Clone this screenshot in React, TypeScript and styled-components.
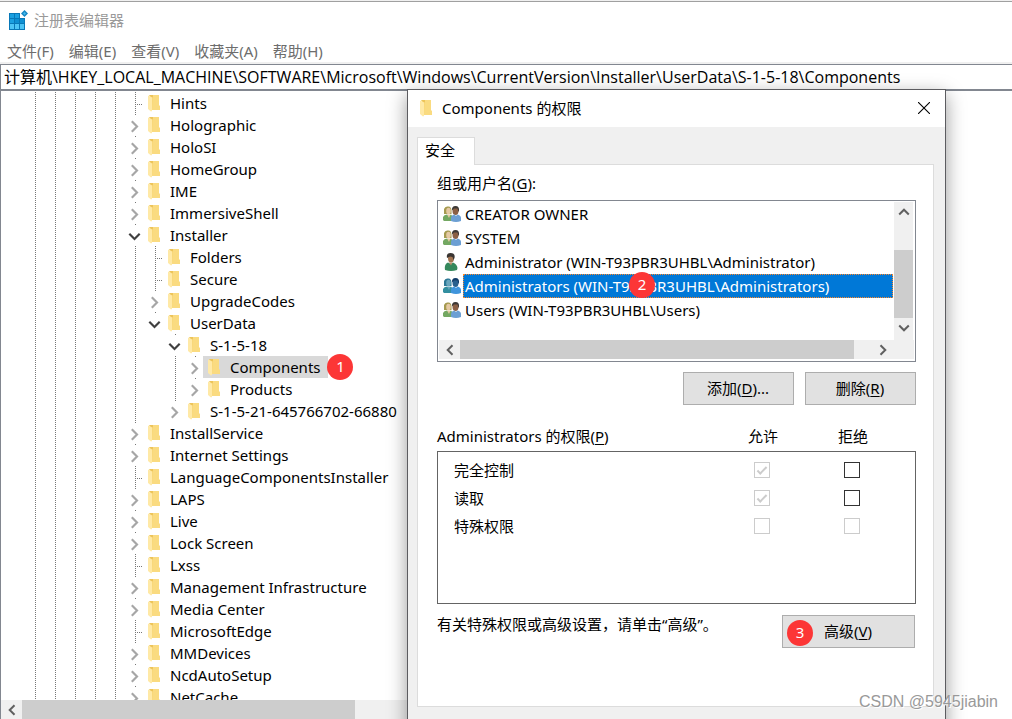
import React from "react";
import styled, { createGlobalStyle, css } from "styled-components";

const GlobalStyle = createGlobalStyle`
  *, *::before, *::after { box-sizing: border-box; }
  body {
    margin: 0;
    background: #fff;
    color: #000;
    font: 15px/20px "Noto Sans", "Noto Sans CJK SC", sans-serif;
  }
  button, input { font: inherit; color: inherit; }
  u { text-underline-offset: 2px; }
`;

const Window = styled.div`
  position: relative;
  display: flex;
  flex-direction: column;
  height: 100vh;
  overflow: hidden;
  border-top: 1px solid #f0f0f0;
`;

const TitleBar = styled.header`
  display: flex;
  align-items: center;
  gap: 6px;
  height: 38px;
  padding: 0 0 2px 8px;
  border-top: 1px solid #a0a0a0;
  color: #999;
`;

const WindowTitle = styled.h1`
  margin: 0;
  font-size: 15px;
  font-weight: 400;
`;

const MenuBar = styled.nav`
  display: flex;
  align-items: center;
  gap: 15px;
  height: 25px;
  padding-left: 7px;
  border-bottom: 2px solid #f0f0f0;
`;

const MenuButton = styled.button`
  padding: 0;
  border: 0;
  background: none;
  color: #6d6d6d;
`;

const AddressInput = styled.input`
  width: 100%;
  height: 26px;
  padding: 0 3px 2px;
  border: 1px solid #828790;
  border-right: 0;
  background: #fff;
  outline: 0;
  font-family: "Open Sans", "Noto Sans CJK SC", sans-serif;
  font-size: 16px;
`;

const Panes = styled.main`
  display: flex;
  flex: 1;
  min-height: 0;
  border-top: 1px solid #828790;
`;

const TreePane = styled.section`
  display: flex;
  flex-direction: column;
  width: 44%;
  border-left: 1px solid #828790;
`;

const TreeList = styled.ul`
  flex: 1;
  min-height: 0;
  margin: 0;
  padding: 1px 0 0 24px;
  overflow: hidden;
  list-style: none;
`;

const TreeRow = styled.li`
  display: flex;
  height: 22px;
  white-space: nowrap;
`;

const dots = "#777 0 1px, transparent 1px 2px";

const Guide = styled.span<{ $line: boolean; $branch?: boolean }>`
  display: flex;
  flex: none;
  width: 20px;
  height: 22px;
  background-repeat: no-repeat;
  ${(p) =>
    p.$line &&
    css`
      background-image: repeating-linear-gradient(to bottom, ${dots})${p.$branch ? `, repeating-linear-gradient(to right, ${dots})` : ""};
      background-size: 1px 22px, 8px 1px;
      background-position: 10px 0, 10px 12px;
    `}
`;

const Expander = styled.button`
  display: grid;
  place-items: center;
  width: 19px;
  height: 20px;
  margin-top: 2px;
  padding: 0;
  border: 0;
  background: #fff;
`;

const NodeLabel = styled.span<{ $selected?: boolean }>`
  position: relative;
  display: flex;
  align-items: center;
  gap: 10px;
  margin-left: -2px;
  padding: 0 8px 0 5px;
  background: ${(p) => (p.$selected ? "#d9d9d9" : "none")};
`;

const Badge = styled.span<{ $left: string; $top: number }>`
  position: absolute;
  z-index: 1;
  left: ${(p) => p.$left};
  top: ${(p) => p.$top}px;
  width: 26px;
  height: 26px;
  border-radius: 50%;
  background: #fc3636;
  color: #fff;
  line-height: 24px;
  text-align: center;
`;

const ScrollTrack = styled.div<{ $vertical?: boolean }>`
  display: flex;
  flex: none;
  flex-direction: ${(p) => (p.$vertical ? "column" : "row")};
  ${(p) => (p.$vertical ? "width: 19px; padding-bottom: 2px;" : "height: 19px;")}
  background: #f0f0f0;
`;

const ScrollButton = styled.button<{ $vertical?: boolean }>`
  display: grid;
  flex: none;
  place-items: center;
  ${(p) => (p.$vertical ? "height: 20px;" : "width: 21px;")}
  padding: 0;
  border: 0;
  background: none;
`;

const ScrollThumb = styled.div<{ $size: number }>`
  flex: ${(p) => p.$size} 0 0;
  background: #cdcdcd;
`;

const ScrollGap = styled.div<{ $size: number }>`
  flex: ${(p) => p.$size} 0 0;
`;

const Dialog = styled.section`
  position: absolute;
  top: 88px;
  left: 407px;
  width: 539px;
  border: 1px solid #5c5c60;
  background: #f0f0f0;
  box-shadow: 0 6px 18px rgba(0, 0, 0, 0.4);
`;

const DialogHeader = styled.header`
  display: flex;
  align-items: center;
  gap: 10px;
  height: 37px;
  padding: 0 9px 2px 12px;
  background: #fff;
`;

const DialogTitle = styled.h2`
  flex: 1;
  margin: 0;
  font-size: 15px;
  font-weight: 400;
`;

const CloseButton = styled.button`
  display: grid;
  place-items: center;
  width: 24px;
  height: 24px;
  padding: 0;
  border: 0;
  background: none;
`;

const DialogBody = styled.div`
  padding: 10px 11px 48px 9px;
`;

const Tab = styled.button`
  position: relative;
  display: block;
  width: 58px;
  height: 28px;
  margin-bottom: -1px;
  padding: 0 7px 3px;
  border: 1px solid #dcdcdc;
  border-bottom: 0;
  background: #fff;
  text-align: left;
`;

const TabPanel = styled.div`
  padding: 8px 17px 58px 19px;
  border: 1px solid #dcdcdc;
  background: #fff;
`;

const FieldLabel = styled.div`
  height: 27px;
`;

const ListFrame = styled.div`
  height: 162px;
  display: flex;
  flex-direction: column;
  padding: 1px 1px 2px;
  border: 1px solid #828790;
`;

const ListArea = styled.div`
  display: flex;
  flex: 1;
  padding-right: 1px;
`;

const Principals = styled.ul`
  flex: 1;
  margin: 0;
  padding: 0 1px 0 4px;
  list-style: none;
`;

const Principal = styled.li`
  display: flex;
  align-items: center;
  gap: 2px;
  height: 24px;
`;

const PrincipalName = styled.span<{ $selected?: boolean }>`
  position: relative;
  flex: 1;
  height: 24px;
  padding: 0 1px;
  border: 1px dotted transparent;
  line-height: 22px;
  white-space: nowrap;
  ${(p) => p.$selected && "background: #0078d7; border-color: #ff8728; color: #fff;"}
`;

const HorizontalScroll = styled.div`
  display: flex;
  background: #f0f0f0;
  padding-right: 21px;
  & > * { flex: 1; }
`;

const ButtonRow = styled.div`
  display: flex;
  justify-content: flex-end;
  gap: 11px;
  margin: 10px 0 21px;
`;

const PushButton = styled.button<{ $width: number }>`
  position: relative;
  width: ${(p) => p.$width}px;
  height: 33px;
  padding: 0 1px 2px 0;
  border: 1px solid #adadad;
  background: #e1e1e1;
`;

const Permissions = styled.table`
  display: block;
`;

const PermissionHead = styled.thead`
  display: block;
  height: 25px;
  padding-right: 18px;
`;

const PermissionBody = styled.tbody`
  display: block;
  height: 153px;
  padding: 4px 18px 0 16px;
  border: 1px solid #646464;
`;

const PermissionRow = styled.tr`
  display: grid;
  grid-template-columns: 1fr 90px 90px;
  align-items: center;
`;

const HeadCell = styled.th<{ $first?: boolean }>`
  padding: 0;
  font-weight: 400;
  text-align: ${(p) => (p.$first ? "left" : "center")};
`;

const NameCell = styled.th`
  padding: 0;
  font-weight: 400;
  line-height: 28px;
  text-align: left;
`;

const CheckCell = styled.td`
  display: grid;
  place-items: center;
  height: 28px;
  padding: 0;
`;

const CheckBox = styled.input`
  display: grid;
  place-items: center;
  width: 16px;
  height: 16px;
  margin: 0;
  appearance: none;
  border: 1px solid #333;
  background: #fff;
  &:disabled { border-color: #ccc; }
  &:checked::after {
    content: "";
    width: 10px;
    height: 5px;
    margin-top: -2px;
    border: solid #ccc;
    border-width: 0 0 2px 2px;
    transform: rotate(-45deg);
  }
`;

const Advanced = styled.div`
  display: flex;
  justify-content: space-between;
  margin-top: 11px;
  padding-right: 1px;
  line-height: 18px;
`;

const Watermark = styled.div`
  position: absolute;
  right: 14px;
  bottom: 7px;
  color: #999;
  font: 16px/20px "Liberation Sans", sans-serif;
  text-shadow: 1px 1px 0 #fff;
`;

type Direction = "left" | "right" | "up" | "down";
const turn: Record<Direction, number> = { right: 0, down: 90, left: 180, up: 270 };

function Chevron({ to, color = "#606060", size = 12 }: { to: Direction; color?: string; size?: number }) {
  return (
    <svg width={size} height={size} viewBox="0 0 12 12" fill="none" stroke={color} strokeWidth="2" aria-hidden="true">
      <path d="M3.5 1.2 8.3 6 3.5 10.8" transform={`rotate(${turn[to]} 6 6)`} />
    </svg>
  );
}

function FolderIcon() {
  return (
    <svg width="12" height="18" viewBox="0 0 12 18" aria-hidden="true">
      <path d="M1.5 1H11V11.5L12 12V16H3Z" fill="#f7d677" />
      <path d="M5 1H11V11.5L12 12V16H4Z" fill="#fadb80" />
      <path d="M1 1H5V3L4 3.5 2 2Z" fill="#edc45a" />
      <path d="M0 1.5 4 3.5V17L3 17.5 0 15Z" fill="#ffe9a6" />
    </svg>
  );
}

function RegistryIcon() {
  return (
    <svg width="20" height="20" viewBox="0 0 20 20" aria-hidden="true">
      <path d="M1 3H12V8H17V20H1Z" fill="#0878b8" />
      <path d="M2 4H6V8H2ZM7 4H11V8H7ZM2 9H6V13H2Z" fill="#1a9fe0" />
      <path d="M7 9H11V13H7ZM12 9H16V13H12Z" fill="#0e8fd2" />
      <path d="M2 14H6V19H2ZM7 14H11V19H7ZM12 14H16V19H12Z" fill="#4cc4f5" />
      <path d="M16.5 0 20 3.5 16.5 7 13 3.5Z" fill="#1587c4" />
      <path d="M16.5 2 18 3.5 16.5 5 15 3.5Z" fill="#43b9ee" />
    </svg>
  );
}

function GroupIcon({ selected }: { selected?: boolean }) {
  const c = selected
    ? { hair: "#2d7896", face: "#6aa6bd", body: "#338fa0", hair2: "#123c68", face2: "#285f8d", body2: "#4095dc" }
    : { hair: "#a59a50", face: "#e5c9a4", body: "#74a862", hair2: "#3c3835", face2: "#8b6045", body2: "#6c9fd3" };
  return (
    <svg width="18" height="18" viewBox="0 -1 18 18" aria-hidden="true">
      <path d="M1 8V3Q2 0 5 .5 8 0 8.5 4V8Z" fill={c.hair} />
      <ellipse cx="5.5" cy="5" rx="2.3" ry="3.3" fill={c.face} />
      <path d="M0 14V11Q1 8.500 4 8.500L6 10 8 8.500 10 11V15H1Z" fill={c.body} />
      <path d="M4 8.500 6 12 7.500 8.500Z" fill={c.face} />
      <ellipse cx="12.5" cy="5" rx="3" ry="4" fill={c.face2} />
      <path d="M9 4.500Q8.500 0 12.500 0 16.500 0 16 5L15.500 6 14.500 2.500 11 2.500Z" fill={c.hair2} />
      <path d="M8 15V12Q8 9 11.500 8.500L13 10 14.500 8.500Q18 9.500 18 12V15Q13 17 8 15Z" fill={c.body2} />
    </svg>
  );
}

function UserIcon() {
  return (
    <svg width="18" height="18" viewBox="0 0 18 18" aria-hidden="true">
      <ellipse cx="8" cy="5.5" rx="3" ry="4" fill="#a37551" />
      <path d="M4 5Q3 0 7.500 0 12.500 0 11.500 5L10.500 7 9.500 4 7 3.500Z" fill="#393532" />
      <path d="M2 17Q1 11 5 9.500L8 11 10 9.500Q14 11 14.500 15L14 17Q8 19 2 17Z" fill="#35885c" />
      <path d="M6 9.500 8 12.500 9.500 9.500Z" fill="#b98d6b" />
    </svg>
  );
}

type NodeKind = "leaf" | "closed" | "open";
interface TreeNode {
  label: string;
  kind: NodeKind;
  guides?: boolean[];
  selected?: boolean;
}

const base = [true, true, true, true, true];
const child = [...base, true];
const grandchild = [...child, false];
const deepest = [...grandchild, true];

const nodes: TreeNode[] = [
  { label: "Hints", kind: "leaf" },
  { label: "Holographic", kind: "closed" },
  { label: "HoloSI", kind: "closed" },
  { label: "HomeGroup", kind: "closed" },
  { label: "IME", kind: "closed" },
  { label: "ImmersiveShell", kind: "closed" },
  { label: "Installer", kind: "open" },
  { label: "Folders", kind: "leaf", guides: child },
  { label: "Secure", kind: "leaf", guides: child },
  { label: "UpgradeCodes", kind: "closed", guides: child },
  { label: "UserData", kind: "open", guides: child },
  { label: "S-1-5-18", kind: "open", guides: grandchild },
  { label: "Components", kind: "closed", guides: deepest, selected: true },
  { label: "Products", kind: "closed", guides: deepest },
  { label: "S-1-5-21-645766702-66880", kind: "closed", guides: grandchild },
  { label: "InstallService", kind: "closed" },
  { label: "Internet Settings", kind: "closed" },
  { label: "LanguageComponentsInstaller", kind: "leaf" },
  { label: "LAPS", kind: "closed" },
  { label: "Live", kind: "closed" },
  { label: "Lock Screen", kind: "closed" },
  { label: "Lxss", kind: "leaf" },
  { label: "Management Infrastructure", kind: "closed" },
  { label: "Media Center", kind: "closed" },
  { label: "MicrosoftEdge", kind: "leaf" },
  { label: "MMDevices", kind: "closed" },
  { label: "NcdAutoSetup", kind: "closed" },
  { label: "NetCache", kind: "closed" },
];

const menus = ["文件(F)", "编辑(E)", "查看(V)", "收藏夹(A)", "帮助(H)"];

const principals = [
  { name: "CREATOR OWNER" },
  { name: "SYSTEM" },
  { name: "Administrator (WIN-T93PBR3UHBL\\Administrator)", single: true },
  { name: "Administrators (WIN-T93PBR3UHBL\\Administrators)", selected: true },
  { name: "Users (WIN-T93PBR3UHBL\\Users)" },
];

const permissions = [
  { name: "完全控制", allowed: true, denyDisabled: false },
  { name: "读取", allowed: true, denyDisabled: false },
  { name: "特殊权限", allowed: false, denyDisabled: true },
];

function TreeItem({ node }: { node: TreeNode }) {
  const guides = node.guides ?? base;
  return (
    <TreeRow role="treeitem" aria-level={guides.length} aria-selected={!!node.selected}>
      {guides.map((line, i) => (
        <Guide key={i} $line={line} />
      ))}
      <Guide $line $branch={node.kind === "leaf"}>
        {node.kind !== "leaf" && (
          <Expander aria-label={node.label}>
            <Chevron
              to={node.kind === "open" ? "down" : "right"}
              color={node.kind === "open" ? "#404040" : "#a6a6a6"}
              size={13}
            />
          </Expander>
        )}
      </Guide>
      <NodeLabel $selected={node.selected}>
        <FolderIcon />
        {node.label}
        {node.selected && <Badge $left="calc(100% - 1px)" $top={-2}>1</Badge>}
      </NodeLabel>
    </TreeRow>
  );
}

function Scrollbar({ vertical, before, thumb, after }: { vertical?: boolean; before: number; thumb: number; after: number }) {
  return (
    <ScrollTrack $vertical={vertical}>
      <ScrollButton $vertical={vertical} aria-label={vertical ? "向上" : "向左"}>
        <Chevron to={vertical ? "up" : "left"} />
      </ScrollButton>
      <ScrollGap $size={before} />
      <ScrollThumb $size={thumb} />
      <ScrollGap $size={after} />
      <ScrollButton $vertical={vertical} aria-label={vertical ? "向下" : "向右"}>
        <Chevron to={vertical ? "down" : "right"} />
      </ScrollButton>
    </ScrollTrack>
  );
}

function PermissionsDialog() {
  return (
    <Dialog role="dialog" aria-labelledby="dialog-title">
      <DialogHeader>
        <FolderIcon />
        <DialogTitle id="dialog-title">Components 的权限</DialogTitle>
        <CloseButton aria-label="关闭">
          <svg width="12" height="12" viewBox="0 0 12 12" stroke="#000" strokeWidth="1.1" aria-hidden="true">
            <path d="M0 0 12 12M12 0 0 12" />
          </svg>
        </CloseButton>
      </DialogHeader>
      <DialogBody>
        <Tab role="tab" aria-selected="true">安全</Tab>
        <TabPanel role="tabpanel">
          <FieldLabel id="principals-label">组或用户名(<u>G</u>):</FieldLabel>
          <ListFrame>
            <ListArea>
              <Principals role="listbox" aria-labelledby="principals-label">
                {principals.map((p) => (
                  <Principal key={p.name} role="option" aria-selected={!!p.selected}>
                    {p.single ? <UserIcon /> : <GroupIcon selected={p.selected} />}
                    <PrincipalName $selected={p.selected}>
                      {p.name}
                      {p.selected && <Badge $left="165px" $top={-3}>2</Badge>}
                    </PrincipalName>
                  </Principal>
                ))}
              </Principals>
              <Scrollbar vertical before={28} thumb={68} after={0} />
            </ListArea>
            <HorizontalScroll>
              <Scrollbar before={0} thumb={394} after={18} />
            </HorizontalScroll>
          </ListFrame>
          <ButtonRow>
            <PushButton $width={111}>添加(<u>D</u>)...</PushButton>
            <PushButton $width={111}>删除(<u>R</u>)</PushButton>
          </ButtonRow>
          <Permissions>
            <PermissionHead>
              <PermissionRow>
                <HeadCell $first>Administrators 的权限(<u>P</u>)</HeadCell>
                <HeadCell>允许</HeadCell>
                <HeadCell>拒绝</HeadCell>
              </PermissionRow>
            </PermissionHead>
            <PermissionBody>
              {permissions.map((p) => (
                <PermissionRow key={p.name}>
                  <NameCell scope="row">{p.name}</NameCell>
                  <CheckCell>
                    <CheckBox type="checkbox" aria-label={`${p.name} 允许`} defaultChecked={p.allowed} disabled />
                  </CheckCell>
                  <CheckCell>
                    <CheckBox type="checkbox" aria-label={`${p.name} 拒绝`} disabled={p.denyDisabled} />
                  </CheckCell>
                </PermissionRow>
              ))}
            </PermissionBody>
          </Permissions>
          <Advanced>
            <span>有关特殊权限或高级设置，请单击“高级”。</span>
            <PushButton $width={133}>
              <Badge $left="4px" $top={4}>3</Badge>
              高级(<u>V</u>)
            </PushButton>
          </Advanced>
        </TabPanel>
      </DialogBody>
    </Dialog>
  );
}

export default function App() {
  return (
    <>
      <GlobalStyle />
      <Window>
        <TitleBar>
          <RegistryIcon />
          <WindowTitle>注册表编辑器</WindowTitle>
        </TitleBar>
        <MenuBar>
          {menus.map((m) => (
            <MenuButton key={m}>{m}</MenuButton>
          ))}
        </MenuBar>
        <AddressInput
          aria-label="地址"
          defaultValue="计算机\HKEY_LOCAL_MACHINE\SOFTWARE\Microsoft\Windows\CurrentVersion\Installer\UserData\S-1-5-18\Components"
        />
        <Panes>
          <TreePane>
            <TreeList role="tree">
              {nodes.map((n) => (
                <TreeItem key={n.label} node={n} />
              ))}
            </TreeList>
            <Scrollbar before={0} thumb={332} after={69} />
          </TreePane>
        </Panes>
        <PermissionsDialog />
        <Watermark>CSDN @5945jiabin</Watermark>
      </Window>
    </>
  );
}
